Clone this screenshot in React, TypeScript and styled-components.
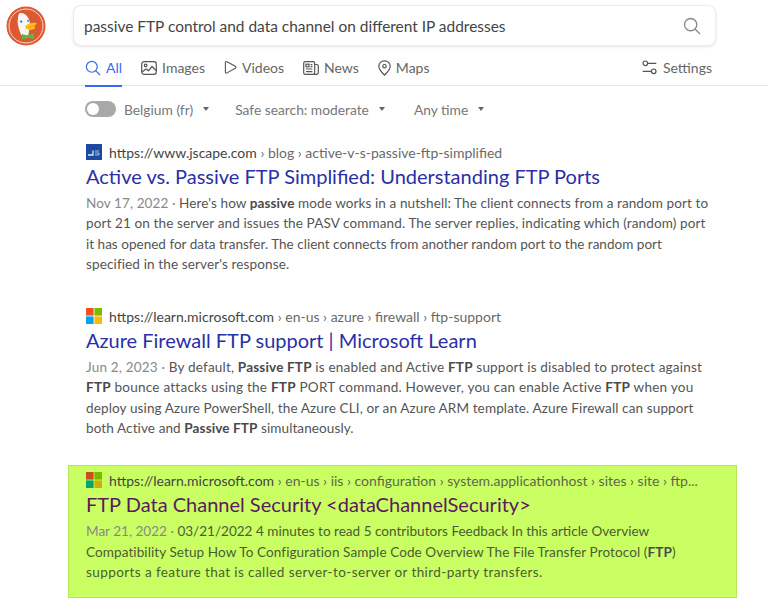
import React from 'react'
import styled, { createGlobalStyle } from 'styled-components'

const GlobalStyle = createGlobalStyle`
  html, body {
    margin: 0;
    padding: 0;
    background: #fff;
    font-family: "Lato", "Open Sans", sans-serif;
  }
`

const Duck = () => (
  <svg width="40" height="40" viewBox="0 0 40 40">
    <circle cx="20" cy="20" r="19.500" fill="#de5833" />
    <circle cx="20" cy="20" r="17" fill="#de5833" stroke="#f6d9cf" strokeWidth="1" />
    <path d="M13 7.500c3-1.500 7 .5 9 4 1.500 3 2 5 2 8l-1 6-1 6-4 .5c-2-1.500-4-5-5-9-1-3.500-2-7-1-10.500 0-2 .5-3.500 1-5z" fill="#f7f5f5" />
    <circle cx="15.200" cy="15.600" r="1.100" fill="#3a5f9e" />
    <circle cx="22" cy="14.800" r="0.900" fill="#3a5f9e" />
    <path d="M19.500 19.500c3-2 8-3.500 10.500-2.500 1.500.7-.5 2.500-3 3 2.500 0 3 2 .5 3.200-2.500 1.100-6 .6-8-.7z" fill="#fdc40f" />
    <path d="M22 21.500c2-.5 4-1 5.500-1.300" stroke="#e9862a" strokeWidth="0.700" fill="none" />
    <path d="M16 28l5 1.300 1.500-.6 5.500-1.700v6l-5.500-1.300-1.500.5-5 1.300z" fill="#5cb83f" />
  </svg>
)

const SearchIcon = ({ size, color }: { size: number; color: string }) => (
  <svg width={size} height={size} viewBox="0 0 20 20" fill="none" stroke={color} strokeWidth="1.500" strokeLinecap="round">
    <circle cx="8.500" cy="8.500" r="6.800" />
    <path d="M13.600 13.600L18.400 18.400" />
  </svg>
)

const ImagesIcon = () => (
  <svg width="16" height="14" viewBox="0 0 16 14" fill="none" stroke="#555" strokeWidth="1.200">
    <rect x="0.700" y="0.700" width="14.600" height="12.600" rx="2.400" />
    <circle cx="4.600" cy="4.400" r="1.300" />
    <path d="M1 11l4-3 2.500 1.600L11 5.500l4 4" />
  </svg>
)

const VideosIcon = () => (
  <svg width="13" height="15" viewBox="0 0 14 15" fill="none" stroke="#555" strokeWidth="1.200" strokeLinejoin="round">
    <path d="M1.500 2.200c0-1 .9-1.400 1.700-1l9 5c.8.500.8 1.600 0 2.100l-9 5c-.8.400-1.700 0-1.700-1z" />
  </svg>
)

const NewsIcon = () => (
  <svg width="16" height="14" viewBox="0 0 16 14" fill="none" stroke="#555" strokeWidth="1.200">
    <rect x="0.700" y="0.700" width="11" height="12.600" rx="1.600" />
    <path d="M11.700 3.500h2c.9 0 1.600.6 1.600 1.500v6.600c0 1-.7 1.700-1.700 1.700h-3" />
    <rect x="3" y="3.200" width="3" height="2.600" />
    <path d="M3 8h6.400M3 10.600h6.400M7.600 3.600h1.800M7.600 5.600h1.800" />
  </svg>
)

const MapsIcon = () => (
  <svg width="13" height="16" viewBox="0 0 13 16" fill="none" stroke="#555" strokeWidth="1.200">
    <path d="M6.500.8C3.200.8.8 3.200.8 6.300c0 3.600 3.600 6.400 5.700 8.900 2.100-2.500 5.700-5.300 5.700-8.900C12.200 3.200 9.800.8 6.500.8z" />
    <circle cx="6.500" cy="6.200" r="1.700" />
  </svg>
)

const SettingsIcon = () => (
  <svg width="15" height="15" viewBox="0 0 15 15" fill="none" stroke="#555" strokeWidth="1.200">
    <circle cx="3.300" cy="3.300" r="2.300" />
    <path d="M6 3.300h8.300M.7 11.300h8.300" />
    <circle cx="11.700" cy="11.300" r="2.300" />
  </svg>
)

const JscapeIcon = () => (
  <svg width="16" height="16" viewBox="0 0 16 16">
    <rect width="16" height="16" fill="#1b4aa0" />
    <path d="M2 11h5V6.500" fill="none" stroke="#dfe8f6" strokeWidth="1.300" />
    <path d="M9 7h4M9 9h4v2H9" fill="none" stroke="#a9c0e4" strokeWidth="1" />
  </svg>
)

const MicrosoftIcon = ({ colors }: { colors: string[] }) => (
  <svg width="16" height="16" viewBox="0 0 16 16">
    <rect width="7.600" height="7.600" fill={colors[0]} />
    <rect x="8.400" width="7.600" height="7.600" fill={colors[1]} />
    <rect y="8.400" width="7.600" height="7.600" fill={colors[2]} />
    <rect x="8.400" y="8.400" width="7.600" height="7.600" fill={colors[3]} />
  </svg>
)

const tabs = [
  { label: 'All', icon: <SearchIcon size={16} color="#3969ef" />, active: true },
  { label: 'Images', icon: <ImagesIcon /> },
  { label: 'Videos', icon: <VideosIcon /> },
  { label: 'News', icon: <NewsIcon /> },
  { label: 'Maps', icon: <MapsIcon /> },
]

export default function App() {
  return (
    <Page>
      <GlobalStyle />
      <Header>
        <LogoSlot><Duck /></LogoSlot>
        <SearchBox>
          <Query>passive FTP control and data channel on different IP addresses</Query>
          <SearchIcon size={18} color="#8a8a8a" />
        </SearchBox>
      </Header>

      <TabBar>
        <Tabs>
          {tabs.map((t) => (
            <Tab key={t.label} $active={t.active}>
              {t.icon}
              {t.label}
            </Tab>
          ))}
        </Tabs>
        <Settings>
          <SettingsIcon />
          Settings
        </Settings>
      </TabBar>

      <Filters>
        <Switch />
        <Filter $gap={26}>Belgium (fr)<Caret /></Filter>
        <Filter $gap={29}>Safe search: moderate<Caret /></Filter>
        <Filter>Any time<Caret /></Filter>
      </Filters>

      <Results>
        <Result>
          <UrlRow>
            <JscapeIcon />
            <Url>https://www.jscape.com<Crumbs> › blog › active-v-s-passive-ftp-simplified</Crumbs></Url>
          </UrlRow>
          <Title>Active vs. Passive FTP Simplified: Understanding FTP Ports</Title>
          <Snippet>
            <Line $ls={0.08}><PostDate>Nov 17, 2022 · </PostDate>Here's how <b>passive</b> mode works in a nutshell: The client connects from a random port to</Line>
            <Line $ls={0.1}>port 21 on the server and issues the PASV command. The server replies, indicating which (random) port</Line>
            <Line>it has opened for data transfer. The client connects from another random port to the random port</Line>
            <Line $ls={0.11}>specified in the server's response.</Line>
          </Snippet>
        </Result>

        <Result $top={34}>
          <UrlRow>
            <MicrosoftIcon colors={['#f25022', '#7fba00', '#00a4ef', '#ffb900']} />
            <Url>https://learn.microsoft.com<Crumbs> › en-us › azure › firewall › ftp-support</Crumbs></Url>
          </UrlRow>
          <Title>Azure Firewall FTP support | Microsoft Learn</Title>
          <Snippet>
            <Line $ls={0.17}><PostDate>Jun 2, 2023 · </PostDate>By default, <b>Passive FTP</b> is enabled and Active <b>FTP</b> support is disabled to protect against</Line>
            <Line $ls={0.22}><b>FTP</b> bounce attacks using the <b>FTP</b> PORT command. However, you can enable Active <b>FTP</b> when you</Line>
            <Line $ls={0.11}>deploy using Azure PowerShell, the Azure CLI, or an Azure ARM template. Azure Firewall can support</Line>
            <Line $ls={0.09}>both Active and <b>Passive FTP</b> simultaneously.</Line>
          </Snippet>
        </Result>

        <Highlight>
          <UrlRow>
            <MicrosoftIcon colors={['#c9501c', '#7cb800', '#00a66c', '#ccb000']} />
            <Url>https://learn.microsoft.com<Crumbs> › en-us › iis › configuration › system.applicationhost › sites › site › ftp...</Crumbs></Url>
          </UrlRow>
          <Title $visited>FTP Data Channel Security &lt;dataChannelSecurity&gt;</Title>
          <Snippet>
            <Line><PostDate>Mar 21, 2022 · </PostDate>03/21/2022 4 minutes to read 5 contributors Feedback In this article Overview</Line>
            <Line $ls={0.08}>Compatibility Setup How To Configuration Sample Code Overview The File Transfer Protocol (<b>FTP</b>)</Line>
            <Line $ls={0.39}>supports a feature that is called server-to-server or third-party transfers.</Line>
          </Snippet>
        </Highlight>
      </Results>
    </Page>
  )
}

const Page = styled.div`
  width: 768px;
  height: 609px;
  overflow: hidden;
  color: #555;
`

const Header = styled.div`
  display: flex;
  align-items: center;
  padding-top: 5px;
`

const LogoSlot = styled.div`
  width: 40px;
  height: 40px;
  margin: 1px 27px 0 6px;
`

const SearchBox = styled.div`
  width: 643px;
  height: 41px;
  box-sizing: border-box;
  padding: 0 14px 0 10px;
  display: flex;
  align-items: center;
  justify-content: space-between;
  background: #fff;
  border: 1px solid #ececec;
  border-radius: 8px;
  box-shadow: 0 1px 3px rgba(0, 0, 0, 0.1);
`

const Query = styled.span`
  font-size: 15.450px;
  color: #444;
`

const TabBar = styled.div`
  display: flex;
  justify-content: space-between;
  height: 40px;
  box-sizing: border-box;
  padding: 0 56px 0 85px;
  border-bottom: 1px solid #e6e6e6;
`

const Tabs = styled.div`
  display: flex;
  gap: 19px;
`

const Tab = styled.div<{ $active?: boolean }>`
  display: flex;
  align-items: center;
  gap: 5px;
  height: 41px;
  box-sizing: border-box;
  padding-top: 4px;
  font-size: 14px;
  color: ${(p) => (p.$active ? '#3969ef' : '#666')};
  border-bottom: 2px solid ${(p) => (p.$active ? '#3969ef' : 'transparent')};
`

const Settings = styled.div`
  display: flex;
  align-items: center;
  gap: 6px;
  padding-top: 4px;
  padding-bottom: 1px;
  font-size: 14px;
  color: #666;
`

const Filters = styled.div`
  display: flex;
  align-items: center;
  height: 24px;
  margin-top: 11px;
  padding-left: 85px;
  font-size: 13.800px;
  color: #777;
`

const Switch = styled.div`
  position: relative;
  width: 31px;
  height: 16px;
  margin-right: 8px;
  border-radius: 8px;
  background: #a8a8a8;

  &::before {
    content: '';
    position: absolute;
    left: 2px;
    top: 2px;
    width: 12px;
    height: 12px;
    border-radius: 50%;
    background: #fff;
  }
`

const Filter = styled.div<{ $gap?: number }>`
  display: flex;
  align-items: center;
  margin-right: ${(p) => p.$gap ?? 0}px;
`

const Caret = styled.span`
  width: 0;
  height: 0;
  margin-left: 10px;
  border-left: 3.500px solid transparent;
  border-right: 3.500px solid transparent;
  border-top: 4px solid #666;
`

const Results = styled.div`
  margin-top: 23px;
  display: flex;
  flex-direction: column;
`

const Result = styled.div<{ $top?: number }>`
  margin: ${(p) => p.$top ?? 0}px 0 0 86px;
`

const Highlight = styled.div`
  width: 669px;
  height: 133px;
  box-sizing: border-box;
  margin: 27px 0 0 68px;
  padding: 6px 0 0 17px;
  background: #c9ff63;
  border: 1px solid #b5e558;
  color: #4c5c33;
`

const UrlRow = styled.div`
  display: flex;
  align-items: center;
  gap: 7px;
  height: 16px;
`

const Url = styled.span`
  font-size: 14px;
  color: #444;
`

const Crumbs = styled.span`
  opacity: 0.8;
`

const Title = styled.div<{ $visited?: boolean }>`
  margin-top: 3px;
  font-size: 20px;
  line-height: 26px;
  white-space: nowrap;
  color: ${(p) => (p.$visited ? '#5b1a5e' : '#2a2fa8')};
`

const Snippet = styled.div`
  margin-top: 4px;
  font-size: 13.550px;
  line-height: 20.300px;
  white-space: nowrap;

  b {
    font-weight: 700;
    color: #4a4a4a;
  }
`

const Line = styled.div<{ $ls?: number }>`
  letter-spacing: ${(p) => p.$ls ?? 0}px;
`

const PostDate = styled.span`
  color: #888;
`
